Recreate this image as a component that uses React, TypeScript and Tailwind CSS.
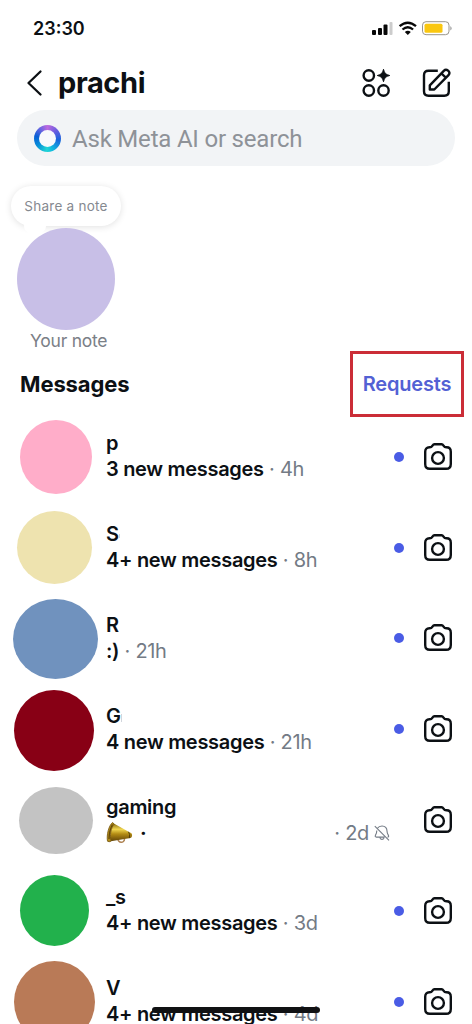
import { clsx } from 'clsx';

interface Chat {
  name: string;
  preview: string;
  time: string;
  unread: boolean;
  avatar: string;
  clipped?: string;
  muted?: boolean;
}

const chats: Chat[] = [
  { name: 'p', preview: '3 new messages', time: '4h', unread: true, avatar: 'ml-5 h-[74px] w-[72px] bg-[#ffadc9]' },
  { name: 'S', preview: '4+ new messages', time: '8h', unread: true, avatar: 'ml-[17px] h-[73px] w-[75px] bg-[#eee3af]', clipped: 'h-1' },
  { name: 'R', preview: ':)', time: '21h', unread: true, avatar: 'ml-[13px] mt-px h-20 w-[85px] bg-[#7092be]' },
  { name: 'G', preview: '4 new messages', time: '21h', unread: true, avatar: 'ml-[14px] mt-[3px] h-[81px] w-20 bg-[#880015]', clipped: 'h-2' },
  { name: 'gaming', preview: '', time: '2d', unread: false, avatar: 'ml-[19px] h-[67px] w-[74px] bg-[#c3c3c3]', muted: true },
  { name: '_s', preview: '4+ new messages', time: '3d', unread: true, avatar: 'ml-[20px] h-[71px] w-[69px] bg-[#22b14c]' },
  { name: 'V', preview: '4+ new messages', time: '4d', unread: true, avatar: 'ml-[14px] h-[82px] w-[81px] bg-[#b97a57]' },
];

function CameraIcon() {
  return (
    <svg width="30" height="30" viewBox="0 0 30 30" fill="none" stroke="#0c1014" strokeWidth="2.4" strokeLinejoin="round">
      <path d="M11.4 2.300h7.200c1.200 0 1.600.8 2.100 1.500.6 1 1.300 1.500 2.500 1.500h.4c2.800 0 4.200 1.700 4.200 4.500v12.100c0 3.400-1.400 4.900-4.700 4.900H6.900c-3.300 0-4.700-1.500-4.700-4.900V9.800c0-2.800 1.400-4.500 4.200-4.500h.4c1.200 0 1.900-.5 2.500-1.500.5-.7.9-1.500 2.100-1.500z" />
      <circle cx="15" cy="16" r="5.900" />
    </svg>
  );
}

function MegaphoneIcon() {
  return (
    <svg width="27" height="24" viewBox="0 0 27 24" className="shrink-0">
      <defs>
        <linearGradient id="horn" x1="0" y1="0" x2="0" y2="1">
          <stop offset="0" stopColor="#80620c" />
          <stop offset=".35" stopColor="#f0d64f" />
          <stop offset=".6" stopColor="#b38b13" />
          <stop offset="1" stopColor="#5f4208" />
        </linearGradient>
      </defs>
      <path d="M12 17.500c-.3 5 6.500 5 6.500.5" fill="none" stroke="#ad8150" strokeWidth="1.500" />
      <path d="M6.500 1.800 24 11.500q2.500.5 2 3.800-.4 2-3 1.900L3.300 20.500z" fill="url(#horn)" />
      <path d="M6.500 1.500C2.800 4.500.300 14 1.500 20.200q1.500 1.200 3.700-.2C3.400 15 5 6.500 8.200 3z" fill="#b08c18" stroke="#765510" strokeWidth=".8" />
      <path d="M6.500 3.500Q3.300 9 3 18" fill="none" stroke="#654808" strokeWidth="1.300" />
      <path d="M22.500 10.800q2 2.500.8 6.300" fill="none" stroke="#4e3b08" />
    </svg>
  );
}

function MutedIcon() {
  return (
    <svg width="16" height="16" viewBox="0 0 16 16" fill="none" stroke="#737b85" strokeWidth="1.100">
      <path d="M3.200 3.500Q5 1 8 1c3.200 0 5 2.300 5 5 0 2.200.6 3 1.500 4.500.5 1-.1 1.600-1 1.600M10.500 12.100H2.300c-1 0-1.400-.8-.9-1.700C2.300 9 2.800 8 2.800 5.500M5.800 12.300c.3 2.800 4.100 2.800 4.400 0M.8 1.200 15 15.300" />
    </svg>
  );
}

function StatusBar() {
  return (
    <div className="flex h-14 shrink-0 items-center justify-between pl-[33px] pr-[19px]">
      <span className="text-[18px] font-semibold">23:30</span>
      <svg width="82" height="16" viewBox="0 0 82 16">
        <g fill="#080808">
          <rect x="1" y="10" width="4" height="5" rx="1" />
          <rect x="7" y="8" width="4" height="7" rx="1" />
          <rect x="12.500" y="4.500" width="4" height="10.500" rx="1" />
          <rect x="18.500" y="2" width="3" height="13" rx="1" fill="#ccc" />
        </g>
        <g fill="none" stroke="#080808" strokeWidth="2.300">
          <path d="M28.600 6.200q8.200-7 16.400 0" />
          <path d="M31.500 9.500q5.300-4.600 10.600 0" />
        </g>
        <path d="M33.800 12q3-2.400 6 0l-3 3z" fill="#080808" />
        <rect x="51.500" y="1.700" width="26.500" height="13" rx="3.500" fill="#fff" stroke="#99958b" />
        <rect x="53.500" y="3.700" width="18" height="9" rx="1.500" fill="#fac710" />
        <path d="M79.500 6v4.500q2-2.200 0-4.500" fill="#777" />
      </svg>
    </div>
  );
}

function Header() {
  return (
    <header className="flex h-[54px] shrink-0 items-center pl-[26px] pr-[20px]">
      <svg width="17" height="28" viewBox="0 0 17 28" fill="none" stroke="#0c1014" strokeWidth="2.300" strokeLinecap="round" strokeLinejoin="round">
        <path d="M14.500 2.500 2.500 14l12 11.500" />
      </svg>
      <h1 className="ml-[15px] text-[29px] leading-[36px] font-bold tracking-[-0.400px]">prachi</h1>
      <svg width="30" height="30" viewBox="0 0 30 30" className="ml-auto" fill="none" stroke="#0c1014" strokeWidth="2.400">
        <circle cx="7.800" cy="7.500" r="5.200" />
        <circle cx="7.800" cy="22.500" r="5.200" />
        <circle cx="22.500" cy="22.500" r="5.200" />
        <path d="M22.500 1.300c.9 3.900 2.300 5.300 6.200 6.200-3.900.9-5.300 2.300-6.200 6.200-.9-3.900-2.300-5.300-6.200-6.200 3.900-.9 5.300-2.300 6.200-6.200z" fill="#0c1014" stroke="#0c1014" strokeWidth="1" />
      </svg>
      <svg width="30" height="30" viewBox="0 0 30 30" className="ml-[31px]" fill="none" stroke="#0c1014" strokeWidth="2.400" strokeLinejoin="round">
        <path d="M15.800 2.800H6.500Q2 2.800 2 7.300v16Q2 27.800 6.500 27.800h15.800q4.500 0 4.500-4.500v-9.500" />
        <path d="m7.800 17.300 14-14.500q2-2 4.300-.2 2.500 2.300.4 4.500L12.300 21.500H7.800zM19.500 5.500l4.300 4.200" />
      </svg>
    </header>
  );
}

function NoteBubble() {
  return (
    <section className="h-[185px] shrink-0 pt-[20px]">
      <div className="relative ml-[11px] flex h-10 w-[110px] items-center justify-center rounded-full bg-white shadow-[0_1px_7px_rgba(0,0,0,0.12)]">
        <span className="text-[13.500px] tracking-[0.250px] text-[#858990]">Share a note</span>
        <div className="absolute top-[33px] left-[13px] h-[14px] w-[22px] rounded-full bg-white" />
      </div>
      <div className="relative mt-[2px] ml-[17px] h-[102px] w-[98px] rounded-[50%] bg-[#c8bfe7]" />
      <p className="ml-[30px] text-[17.500px] leading-[21px] tracking-[-0.250px] text-[#7b8087]">Your note</p>
    </section>
  );
}

function ChatRow({ chat }: { chat: Chat }) {
  return (
    <li className="flex h-[90.800px] shrink-0 items-center">
      <div className="w-[106px] shrink-0">
        <div className={clsx('rounded-[50%]', chat.avatar)} />
      </div>
      <div className="flex-1 pb-px text-[20px] leading-[26px] tracking-[-0.300px] whitespace-nowrap">
        <div className="flex items-center font-semibold">
          {chat.name}
          {chat.clipped && <span className={clsx('mt-1 w-px bg-gray-300', chat.clipped)} />}
        </div>
        {chat.muted ? (
          <div className="flex h-[26px] items-center text-[#737b85]">
            <MegaphoneIcon />
            <span className="ml-[7px] font-bold text-[#0c1014]">·</span>
            <span className="ml-auto">· {chat.time}</span>
            <span className="mr-[33px] ml-[5px]"><MutedIcon /></span>
          </div>
        ) : (
          <div className="text-[#737b85]">
            <span className="font-semibold text-[#0c1014]">{chat.preview}</span> · {chat.time}
          </div>
        )}
      </div>
      {chat.unread && <span className="mr-[19px] size-[10px] rounded-full bg-[#4a5ce5]" />}
      <div className="mr-[19px]"><CameraIcon /></div>
    </li>
  );
}

export default function App() {
  return (
    <div className="relative flex h-[1024px] w-[472px] flex-col overflow-hidden bg-white font-[Inter,sans-serif] text-[#0c1014]">
      <StatusBar />
      <Header />
      <div className="mx-[17px] flex h-[56px] shrink-0 items-center rounded-full bg-[#f2f4f6] pl-[17px]">
        <div className="size-[27px] shrink-0 rounded-full bg-[conic-gradient(from_0deg,#bd69df,#655cdf_14%,#1765dc_27%,#10b8df_43%,#20d5d5_51%,#078fd9_65%,#075fd6_78%,#6b64e1_90%,#bd69df)] p-[5px]">
          <div className="size-full rounded-full bg-[#f8f9fc]" />
        </div>
        <span className="ml-[11px] pt-px font-[Roboto,sans-serif] text-[24px] tracking-[-0.200px] text-[#8e9298]">Ask Meta AI or search</span>
      </div>
      <NoteBubble />
      <div className="flex h-[66px] shrink-0 items-center justify-between pr-[8px] pl-[20px]">
        <h2 className="text-[22px] font-bold tracking-[-0.100px]">Messages</h2>
        <div className="flex h-[66px] w-[114px] items-center justify-center border-3 border-[#cb2d37] text-[20px] font-semibold tracking-[-0.200px] text-[#5361d4]">
          Requests
        </div>
      </div>
      <ul className="-mt-[5.500px] flex flex-col">
        {chats.map((chat) => (
          <ChatRow key={chat.name} chat={chat} />
        ))}
      </ul>
      <div className="absolute top-[1007px] left-[152px] h-[6px] w-[168px] rounded-full bg-[#101113]" />
    </div>
  );
}
